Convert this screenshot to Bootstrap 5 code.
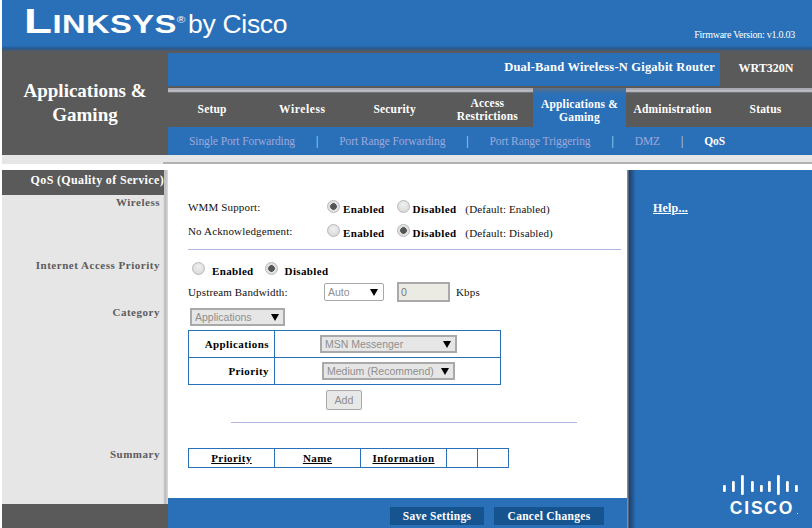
<!DOCTYPE html>
<html lang="en"><head><meta charset="utf-8"><title>QoS</title>
<link rel="stylesheet" href="https://cdn.jsdelivr.net/npm/bootstrap@5.3.0/dist/css/bootstrap.min.css">
<style>
html,body{height:100%;overflow:hidden}
body{background:#fff;padding-left:2px;font:11px/13px "Liberation Serif",serif;color:#111;width:812px;height:528px}
.shell{width:810px;height:528px}
.topbar{height:51px;background:linear-gradient(#2a70b8 46px,#245a94 48px,#4c5a6c 51px);color:#fff}
.brand{padding:3px 0 0 22px;white-space:nowrap;line-height:36px}
.lk{font:700 25px/36px "Liberation Sans",sans-serif;display:inline-block;transform:scaleX(1.31);transform-origin:left;width:152px;letter-spacing:.3px}
.lk b{font-size:35px;font-weight:700}
.lk sup{font-size:9px;font-weight:400;top:-1.1em;letter-spacing:0}
.bycisco{font:400 26.5px/36px "Liberation Sans",sans-serif;margin-left:12px;letter-spacing:-.3px}
.fw{position:absolute;right:17px;top:28px;font-size:10px;letter-spacing:-.25px}
.headrow{height:104px}
.apptitle{width:166px;background:#5a5a5a;color:#fff;font-weight:700;font-size:19px;line-height:24px;text-align:center;padding-top:28px}
.headright{width:644px;background:#5a5a5a}
.prodrow{height:37px;padding-top:2px}
.prod{width:552px;height:33px;background:#2a70b8;color:#fff;font-weight:700;font-size:12.5px;text-align:right;padding:8px 5px 0 0;letter-spacing:.2px}
.model{width:92px;color:#fff;font-weight:700;font-size:12px;text-align:center;padding-top:9px}
.tabs{display:grid;grid-template-columns:repeat(4,1fr) 93px 93px 93px;height:39px;background:linear-gradient(#a9a9b4 2px,#d5d5dc 3px,#8f8f96 4px,#5a5a5a 5px)}
.tabi{display:flex;align-items:center;justify-content:center;text-align:center;color:#fff;font-weight:700;font-size:11.5px;line-height:13px;padding-top:4px;letter-spacing:.2px}
.tabn{padding-right:3px}
.tabw{padding-right:5px;letter-spacing:.6px}
.tabi.on{background:linear-gradient(#5a6f88 0,#2a70b8 6px);padding-top:6px}
.subnav{height:28px;background:#2a70b8;padding-left:21px;gap:21px;color:#9fa8dc;font-size:11.5px;align-items:center;letter-spacing:-.09px}
.subnav i{font-style:normal;color:#c8e0f0}
.subnav b{color:#fff}
.band{background:#e6e6e6;padding-top:7px}
.bandline{height:2px;background:#b3b3b3;margin-left:161px}
.mainrow{height:364px}
.leftc{width:166px;background:linear-gradient(90deg,#e6e6e6 161px,#b8b8b8 163px,#dcdcdc 166px);position:relative;height:334px}
.sech{position:relative;margin-top:6px;height:25px;width:162px;background:#5a5a5a;color:#fff;font-weight:700;font-size:12px;text-align:right;padding:4px 0 0 0;letter-spacing:.35px}
.lab{color:#5c5c5c;font-weight:700;font-size:11px;text-align:right;padding-right:8px;letter-spacing:.52px;height:13px;width:166px}
.leftfoot{width:166px;height:30px;background:#5a5a5a}
.centerc{width:459px}
.formz{height:334px;padding:31px 6px 0 20px}
.frow{height:24px;display:flex;align-items:center;letter-spacing:.15px}
.flab{width:139px}
.rd{appearance:none;width:13px;height:13px;border-radius:50%;border:1px solid #b8b8b8;background:radial-gradient(circle at 50% 35%,#f0f0f0,#d4d4d4);margin:0 3px 2px 0;flex:none;display:block}
.rd:checked{background:radial-gradient(circle,#555 0 3px,#dcdcdc 3.6px,#eee)}
.rl{font-weight:700;letter-spacing:.35px;color:#000;margin-top:4px}
.dflt{letter-spacing:.12px;margin:4px 0 0 9px}
.rd2{margin-left:12px}
.rulex{border-top:1px solid #b4b4e0;height:0}
.sel{appearance:none;border:2px solid #a9a9a9;background:#e6e6e6 no-repeat right 4px center;background-image:url("data:image/svg+xml,%3Csvg xmlns='http://www.w3.org/2000/svg' width='8' height='7'%3E%3Cpath d='M0 0h8L4 7z'/%3E%3C/svg%3E");color:#8f8f8f;font:10.5px/14px "Liberation Sans",sans-serif;padding:0 0 0 3px;display:block;border-radius:0}
.selw{border-width:1px;border-radius:2px;background-color:#fff;background-position:right 5px center;padding-left:3px}
.num{width:53px;height:20px;border:2px solid #a9a9a9;background:#ebebe4;color:#777;font:10.5px "Liberation Sans",sans-serif;padding:0 2px;margin:0 6px 0 13px}
.grd{border-collapse:collapse;table-layout:fixed}
.grd td{border:1px solid #2a70b8;padding:0;font-weight:700;color:#000;letter-spacing:.42px;font-size:11px}
.cellsel{padding-left:2px!important}
.addb{width:36px;height:20px;border:1px solid #a9a9a9;border-radius:2px;background:#e8e8e8;color:#8c8c8c;font:10.7px "Liberation Sans",sans-serif;padding:0;display:block;margin:5px 0 0 138px}
.footc{height:30px;background:#2a70b8;padding:9px 23px 0 0;gap:10px;justify-content:flex-end}
.fbtn{background:#16548f;color:#fff;font:700 11.5px/18px "Liberation Serif",serif;height:18px;border:0;padding:0;letter-spacing:.28px}
.rightc{width:185px;position:relative;padding-top:6px}
.helpz{height:358px;background:linear-gradient(90deg,#8a8a8a 1px,#1f3f6a 2px,#2a70b8 9px);padding:32px 0 0 26px;position:relative}
.helpz a{color:#fff;font-weight:700;font-size:12px;letter-spacing:.2px}
.ciscob{position:absolute;right:13px;bottom:11px;text-align:center;width:76px;color:#fff}
.ciscob svg{display:block}
.ciscot{font:700 17.5px/15px "Liberation Sans",sans-serif;letter-spacing:1.8px;margin-top:7px;padding-left:2px;position:relative;top:-1px}
.ciscot::after{content:"";position:absolute;right:1px;bottom:2px;width:1px;height:1px;background:#cfe0f0}
</style></head><body>
<div class="shell">
 <div class="topbar position-relative">
  <div class="brand"><span class="lk"><b>L</b>INKSYS<sup>®</sup></span><span class="bycisco">by Cisco</span></div>
  <div class="fw">Firmware Version: v1.0.03</div>
 </div>
 <div class="headrow d-flex">
  <div class="apptitle">Applications &amp;<br>Gaming</div>
  <div class="headright">
   <div class="prodrow d-flex"><div class="prod">Dual-Band Wireless-N Gigabit Router</div><div class="model">WRT320N</div></div>
   <div class="tabs">
    <div class="tabi tabn">Setup</div><div class="tabi tabw">Wireless</div><div class="tabi tabn">Security</div>
    <div class="tabi">Access<br>Restrictions</div><div class="tabi on">Applications &amp;<br>Gaming</div>
    <div class="tabi">Administration</div><div class="tabi">Status</div>
   </div>
   <div class="subnav d-flex"><span>Single Port Forwarding</span><i>|</i><span>Port Range Forwarding</span><i>|</i><span>Port Range Triggering</span><i>|</i><span>DMZ</span><i>|</i><b>QoS</b></div>
  </div>
 </div>
 <div class="band"><div class="bandline"></div></div>
 <div class="mainrow d-flex">
  <div>
   <div class="leftc pt-0">
    <div class="sech">QoS (Quality of Service)</div>
    <div class="lab" style="margin-top:1px">Wireless</div>
    <div class="lab" style="margin-top:50px">Internet Access Priority</div>
    <div class="lab" style="margin-top:34px">Category</div>
    <div class="lab" style="margin-top:129px">Summary</div>
   </div>
   <div class="leftfoot"></div>
  </div>
  <div class="centerc">
   <div class="formz">
    <div class="frow"><div class="flab">WMM Support:</div><input class="rd" type="radio" name="a" checked><span class="rl">Enabled</span><input class="rd rd2" type="radio" name="a"><span class="rl">Disabled</span><span class="dflt">(Default: Enabled)</span></div>
    <div class="frow"><div class="flab">No Acknowledgement:</div><input class="rd" type="radio" name="b"><span class="rl">Enabled</span><input class="rd rd2" type="radio" name="b" checked><span class="rl">Disabled</span><span class="dflt">(Default: Disabled)</span></div>
    <div class="rulex" style="margin-top:6px"></div>
    <div class="frow" style="padding-left:4px;margin-top:7px;height:25px"><input class="rd" type="radio" name="c"><span class="rl ms-1" style="margin-right:11px">Enabled</span><input class="rd" type="radio" name="c" checked><span class="rl ms-1">Disabled</span></div>
    <div class="frow" style="height:20px"><div style="width:136px">Upstream Bandwidth:</div><select class="sel selw" style="width:60px;height:18px" disabled><option>Auto</option></select><input class="num" value="0" disabled><span>Kbps</span></div>
    <select class="sel" style="width:95px;height:18px;margin:6px 0 0 2px" disabled><option>Applications</option></select>
    <table class="grd mt-1" style="width:313px"><colgroup><col style="width:86px"><col></colgroup>
     <tr style="height:27px"><td class="text-end" style="padding-right:5px">Applications</td><td class="cellsel"><select class="sel mx-auto" style="width:137px;height:18px" disabled><option>MSN Messenger</option></select></td></tr>
     <tr style="height:27px"><td class="text-end" style="padding-right:5px">Priority</td><td class="cellsel"><select class="sel mx-auto" style="width:133px;height:18px" disabled><option>Medium (Recommend)</option></select></td></tr>
    </table>
    <button class="addb" disabled>Add</button>
    <div class="rulex" style="margin:12px 44px 0 43px"></div>
    <table class="grd text-center" style="width:321px;margin-top:25px"><colgroup><col style="width:86px"><col style="width:86px"><col style="width:86px"><col style="width:31px"><col></colgroup>
     <tr style="height:19px"><td><u>Priority</u></td><td><u>Name</u></td><td><u>Information</u></td><td></td><td></td></tr>
    </table>
   </div>
   <div class="footc d-flex"><button class="fbtn" style="width:94px">Save Settings</button><button class="fbtn" style="width:110px">Cancel Changes</button></div>
  </div>
  <div class="rightc">
   <div class="helpz"><a href="#">Help...</a>
    <div class="ciscob">
     <svg width="76" height="20" viewBox="0 0 76 20"><g fill="#fff"><rect x="0" y="10" width="2.8" height="7" rx="1.2"/><rect x="9" y="6" width="2.8" height="11" rx="1.2"/><rect x="18" y="0" width="2.8" height="20" rx="1.2"/><rect x="28" y="6" width="2.8" height="11" rx="1.2"/><rect x="37" y="10" width="2.8" height="7" rx="1.2"/><rect x="45" y="6" width="2.8" height="11" rx="1.2"/><rect x="54" y="0" width="2.8" height="20" rx="1.2"/><rect x="63" y="6" width="2.8" height="11" rx="1.2"/><rect x="72" y="10" width="2.8" height="7" rx="1.2"/></g></svg>
     <div class="ciscot">CISCO</div>
    </div>
   </div>
  </div>
 </div>
</div>
</body></html>
